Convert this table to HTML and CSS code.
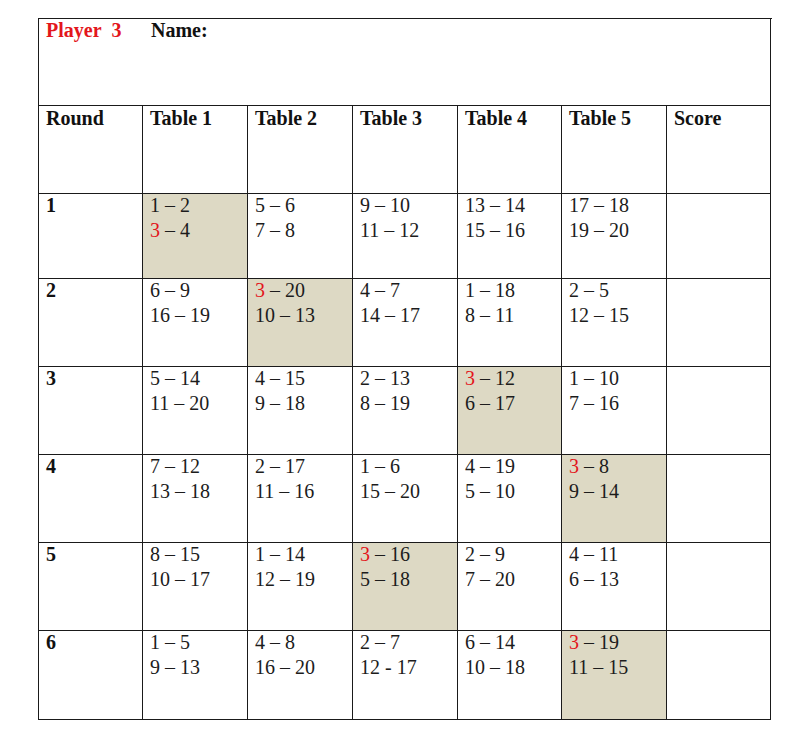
FILE: index.html
```html
<!DOCTYPE html>
<html>
<head>
<meta charset="utf-8">
<link rel="stylesheet" href="styles.css">
</head>
<body>
<div class="sheet">
  <div class="cell title">
    <div class="inner title-row"><span class="player">Player&nbsp; 3</span><span class="name">Name:</span></div>
  </div>

  <div class="cell head"><div class="inner">Round</div></div>
  <div class="cell head"><div class="inner">Table 1</div></div>
  <div class="cell head"><div class="inner">Table 2</div></div>
  <div class="cell head"><div class="inner">Table 3</div></div>
  <div class="cell head"><div class="inner">Table 4</div></div>
  <div class="cell head"><div class="inner">Table 5</div></div>
  <div class="cell head"><div class="inner">Score</div></div>

  <div class="cell rnd"><div class="inner">1</div></div>
  <div class="cell hl"><div class="inner">1 – 2<br><span class="red">3</span> – 4</div></div>
  <div class="cell"><div class="inner">5 – 6<br>7 – 8</div></div>
  <div class="cell"><div class="inner">9 – 10<br>11 – 12</div></div>
  <div class="cell"><div class="inner">13 – 14<br>15 – 16</div></div>
  <div class="cell"><div class="inner">17 – 18<br>19 – 20</div></div>
  <div class="cell"></div>

  <div class="cell rnd"><div class="inner">2</div></div>
  <div class="cell"><div class="inner">6 – 9<br>16 – 19</div></div>
  <div class="cell hl"><div class="inner"><span class="red">3</span> – 20<br>10 – 13</div></div>
  <div class="cell"><div class="inner">4 – 7<br>14 – 17</div></div>
  <div class="cell"><div class="inner">1 – 18<br>8 – 11</div></div>
  <div class="cell"><div class="inner">2 – 5<br>12 – 15</div></div>
  <div class="cell"></div>

  <div class="cell rnd"><div class="inner">3</div></div>
  <div class="cell"><div class="inner">5 – 14<br>11 – 20</div></div>
  <div class="cell"><div class="inner">4 – 15<br>9 – 18</div></div>
  <div class="cell"><div class="inner">2 – 13<br>8 – 19</div></div>
  <div class="cell hl"><div class="inner"><span class="red">3</span> – 12<br>6 – 17</div></div>
  <div class="cell"><div class="inner">1 – 10<br>7 – 16</div></div>
  <div class="cell"></div>

  <div class="cell rnd"><div class="inner">4</div></div>
  <div class="cell"><div class="inner">7 – 12<br>13 – 18</div></div>
  <div class="cell"><div class="inner">2 – 17<br>11 – 16</div></div>
  <div class="cell"><div class="inner">1 – 6<br>15 – 20</div></div>
  <div class="cell"><div class="inner">4 – 19<br>5 – 10</div></div>
  <div class="cell hl"><div class="inner"><span class="red">3</span> – 8<br>9 – 14</div></div>
  <div class="cell"></div>

  <div class="cell rnd"><div class="inner">5</div></div>
  <div class="cell"><div class="inner">8 – 15<br>10 – 17</div></div>
  <div class="cell"><div class="inner">1 – 14<br>12 – 19</div></div>
  <div class="cell hl"><div class="inner"><span class="red">3</span> – 16<br>5 – 18</div></div>
  <div class="cell"><div class="inner">2 – 9<br>7 – 20</div></div>
  <div class="cell"><div class="inner">4 – 11<br>6 – 13</div></div>
  <div class="cell"></div>

  <div class="cell rnd"><div class="inner">6</div></div>
  <div class="cell"><div class="inner">1 – 5<br>9 – 13</div></div>
  <div class="cell"><div class="inner">4 – 8<br>16 – 20</div></div>
  <div class="cell"><div class="inner">2 – 7<br>12 - 17</div></div>
  <div class="cell"><div class="inner">6 – 14<br>10 – 18</div></div>
  <div class="cell hl"><div class="inner"><span class="red">3</span> – 19<br>11 – 15</div></div>
  <div class="cell"></div>
</div>
</body>
</html>
```

FILE: styles.css
```css
html, body {
  margin: 0;
  padding: 0;
  background: #ffffff;
}

body {
  font-family: "Liberation Serif", "Times New Roman", serif;
  font-size: 20px;
  color: #1c1c1c;
}

.sheet {
  margin: 18px 0 0 38px;
  width: 733px;
  display: grid;
  grid-template-columns: 104px 105px 105px 105px 104px 105px 104px;
  grid-template-rows: 87px 88px 85px 88px 88px 88px 88px 89px;
  border-left: 1px solid #1a1a1a;
  border-top: 1px solid #1a1a1a;
  box-sizing: content-box;
}

.cell {
  border-right: 1px solid #1a1a1a;
  border-bottom: 1px solid #1a1a1a;
  box-sizing: border-box;
  padding: 0 0 0 7px;
  line-height: 25px;
}

.inner {
  margin-top: -1px;
}

.title {
  grid-column: 1 / span 7;
}

.title-row {
  display: flex;
  font-weight: bold;
}

.player {
  color: #e3161c;
  width: 105px;
}

.name {
  color: #111111;
}

.head {
  font-weight: bold;
  color: #111111;
}

.head .inner {
  margin-top: 0;
}

.rnd {
  font-weight: bold;
  color: #111111;
}

.hl {
  background: #ddd9c4;
}

.red {
  color: #e3161c;
}
```
